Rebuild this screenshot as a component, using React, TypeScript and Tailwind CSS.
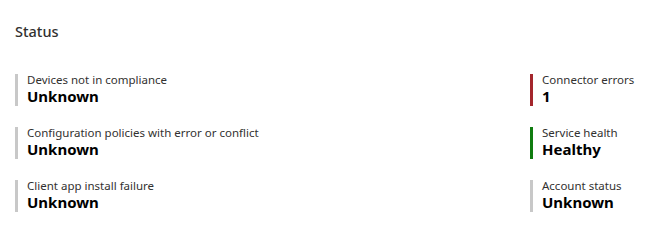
const left = [
  { label: "Devices not in compliance", value: "Unknown", bar: "border-[#c8c8c8]" },
  { label: "Configuration policies with error or conflict", value: "Unknown", bar: "border-[#c8c8c8]" },
  { label: "Client app install failure", value: "Unknown", bar: "border-[#c8c8c8]" },
];

const right = [
  { label: "Connector errors", value: "1", bar: "border-[#a4262c]" },
  { label: "Service health", value: "Healthy", bar: "border-[#107c10]" },
  { label: "Account status", value: "Unknown", bar: "border-[#c8c8c8]" },
];

type Item = { label: string; value: string; bar: string };

const StatusItem = ({ item }: { item: Item }) => (
  <div className={`h-[32px] border-l-[3px] pl-[9px] ${item.bar}`}>
    <div className="-mt-[1px] text-[11.5px] leading-[13px] text-[#323130] whitespace-nowrap">{item.label}</div>
    <div className="text-[15px] leading-[20px] font-bold text-black whitespace-nowrap">{item.value}</div>
  </div>
);

export default function App() {
  return (
    <div
      className="w-[655px] h-[238px] bg-white pl-[15px] pt-[22px]"
      style={{ fontFamily: '"Noto Sans", "Open Sans", sans-serif' }}
    >
      <h2 className="text-[14.5px] leading-[18px] font-medium text-[#323130]">Status</h2>
      <div className="flex mt-[34px]">
        <div className="flex-1 flex flex-col gap-[21px]">
          {left.map((item) => (
            <StatusItem key={item.label} item={item} />
          ))}
        </div>
        <div className="w-[125px] flex flex-col gap-[21px]">
          {right.map((item) => (
            <StatusItem key={item.label} item={item} />
          ))}
        </div>
      </div>
    </div>
  );
}
